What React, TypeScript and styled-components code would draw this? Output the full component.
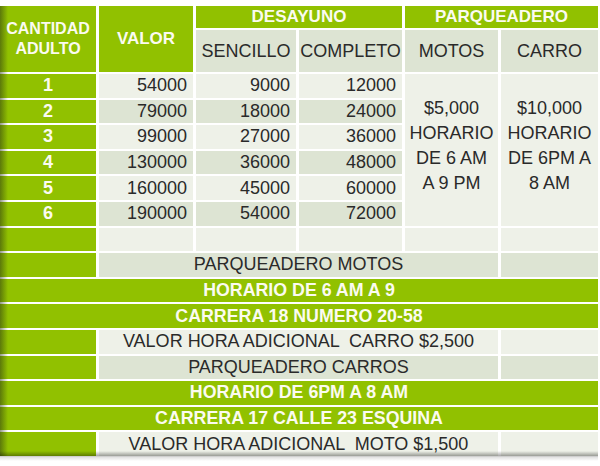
import React from 'react';
import styled, { createGlobalStyle } from 'styled-components';

const GREEN = '#91c100';
const LIGHT = '#eef1e8';
const DARK = '#dde4d3';
const INK = '#2a2a2a';

const GlobalStyle = createGlobalStyle`
  html, body {
    margin: 0;
    padding: 0;
    background: #ffffff;
  }
  body {
    font-family: "Liberation Sans", Arial, sans-serif;
  }
`;

type Shade = 'light' | 'dark';

const Page = styled.div`
  width: 600px;
  height: 466px;
  padding-top: 6px;
  box-sizing: border-box;
  overflow: hidden;
`;

const Sheet = styled.div`
  position: relative;
  display: grid;
  width: 598px;
  grid-template-columns: 96px 94px 100px 103px 93px 97px;
  grid-template-rows: 22px 42px repeat(15, 23.6px);
  column-gap: 3px;
  row-gap: 2px;
  background: #ffffff;

  /* sombra sobre el borde izquierdo */
  &::before {
    content: '';
    position: absolute;
    left: 0;
    top: 0;
    bottom: 0;
    width: 8px;
    background: linear-gradient(
      to right,
      rgba(40, 50, 20, 0.5),
      rgba(40, 50, 20, 0)
    );
    pointer-events: none;
  }

  /* sombra inferior */
  &::after {
    content: '';
    position: absolute;
    left: 0;
    right: 0;
    bottom: -5px;
    height: 10px;
    background: linear-gradient(
      to bottom,
      rgba(0, 0, 0, 0) 0%,
      rgba(0, 0, 0, 0.32) 45%,
      rgba(0, 0, 0, 0.12) 60%,
      rgba(0, 0, 0, 0) 100%
    );
    pointer-events: none;
  }
`;

const Cell = styled.div<{ $rows?: number; $cols?: number }>`
  grid-row: span ${(p) => p.$rows ?? 1};
  grid-column: span ${(p) => p.$cols ?? 1};
  display: flex;
  align-items: center;
  justify-content: center;
  box-sizing: border-box;
  white-space: nowrap;
`;

const HeadCell = styled(Cell)<{ $small?: boolean }>`
  background: ${GREEN};
  color: #fbfbf0;
  font-weight: 700;
  font-size: ${(p) => (p.$small ? '16px' : '17px')};
  line-height: 20px;
  text-align: center;
`;

const SubHead = styled(Cell)`
  background: ${DARK};
  color: ${INK};
  font-size: 18px;
`;

const NumCell = styled(Cell)`
  background: ${GREEN};
  color: #fbfbf0;
  font-weight: 700;
  font-size: 18px;
`;

const Value = styled(Cell)<{ $shade: Shade }>`
  background: ${(p) => (p.$shade === 'light' ? LIGHT : DARK)};
  color: ${INK};
  font-size: 18px;
  justify-content: flex-end;
  padding-right: 6px;
`;

const Merged = styled(Cell)`
  background: ${LIGHT};
  color: ${INK};
  font-size: 18px;
  line-height: 25px;
  text-align: center;
  padding-bottom: 8px;
`;

const Note = styled(Cell)<{ $shade: Shade }>`
  background: ${(p) => (p.$shade === 'light' ? LIGHT : DARK)};
  color: ${INK};
  font-size: 18px;
  white-space: pre;
`;

const Filler = styled(Cell)<{ $shade: Shade }>`
  background: ${(p) => (p.$shade === 'light' ? LIGHT : DARK)};
`;

const Banner = styled(Cell)`
  grid-column: 1 / -1;
  background: ${GREEN};
  color: #fbfbf0;
  font-weight: 700;
  font-size: 17.8px;
`;

const prices = [
  ['1', '54000', '9000', '12000'],
  ['2', '79000', '18000', '24000'],
  ['3', '99000', '27000', '36000'],
  ['4', '130000', '36000', '48000'],
  ['5', '160000', '45000', '60000'],
  ['6', '190000', '54000', '72000'],
];

function Parking({
  title,
  schedule,
  address,
  extra,
}: {
  title: string;
  schedule: string;
  address: string;
  extra: string;
}) {
  return (
    <>
      <NumCell />
      <Note $cols={4} $shade="dark">
        {title}
      </Note>
      <Filler $shade="dark" />
      <Banner>{schedule}</Banner>
      <Banner>{address}</Banner>
      <NumCell />
      <Note $cols={4} $shade="light">
        {extra}
      </Note>
      <Filler $shade="light" />
    </>
  );
}

export default function App() {
  return (
    <Page>
      <GlobalStyle />
      <Sheet>
        <HeadCell $rows={2} $small>
          CANTIDAD
          <br />
          ADULTO
        </HeadCell>
        <HeadCell $rows={2}>VALOR</HeadCell>
        <HeadCell $cols={2}>DESAYUNO</HeadCell>
        <HeadCell $cols={2}>PARQUEADERO</HeadCell>

        <SubHead>SENCILLO</SubHead>
        <SubHead>COMPLETO</SubHead>
        <SubHead>MOTOS</SubHead>
        <SubHead>CARRO</SubHead>

        {prices.map((row, i) => {
          const shade: Shade = i % 2 === 0 ? 'light' : 'dark';
          return (
            <React.Fragment key={row[0]}>
              <NumCell>{row[0]}</NumCell>
              <Value $shade={shade}>{row[1]}</Value>
              <Value $shade={shade}>{row[2]}</Value>
              <Value $shade={shade}>{row[3]}</Value>
              {i === 0 && (
                <>
                  <Merged $rows={6}>
                    $5,000
                    <br />
                    HORARIO
                    <br />
                    DE 6 AM
                    <br />A 9 PM
                  </Merged>
                  <Merged $rows={6}>
                    $10,000
                    <br />
                    HORARIO
                    <br />
                    DE 6PM A
                    <br />8 AM
                  </Merged>
                </>
              )}
            </React.Fragment>
          );
        })}

        <NumCell />
        <Value $shade="light" />
        <Value $shade="light" />
        <Value $shade="light" />
        <Filler $shade="light" />
        <Filler $shade="light" />

        <Parking
          title="PARQUEADERO MOTOS"
          schedule="HORARIO DE 6 AM A 9"
          address="CARRERA 18 NUMERO 20-58"
          extra="VALOR HORA ADICIONAL  CARRO $2,500"
        />
        <Parking
          title="PARQUEADERO CARROS"
          schedule="HORARIO DE 6PM A 8 AM"
          address="CARRERA 17 CALLE 23 ESQUINA"
          extra="VALOR HORA ADICIONAL  MOTO $1,500"
        />
      </Sheet>
    </Page>
  );
}
